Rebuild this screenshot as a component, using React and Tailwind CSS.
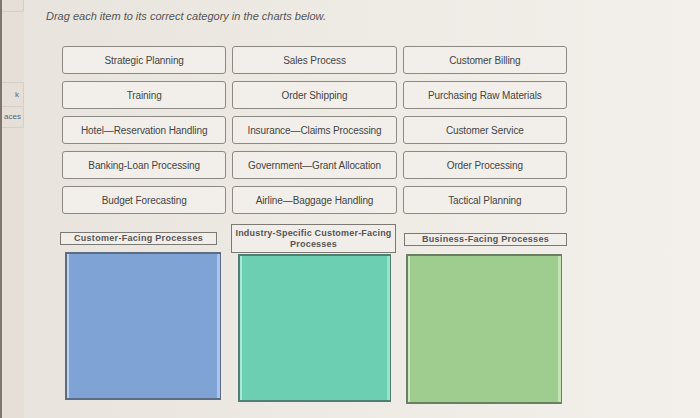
import React from 'react';

const ITEMS = [
  'Strategic Planning', 'Sales Process', 'Customer Billing',
  'Training', 'Order Shipping', 'Purchasing Raw Materials',
  'Hotel\u2014Reservation Handling', 'Insurance\u2014Claims Processing', 'Customer Service',
  'Banking-Loan Processing', 'Government\u2014Grant Allocation', 'Order Processing',
  'Budget Forecasting', 'Airline\u2014Baggage Handling', 'Tactical Planning',
];

const font = { fontFamily: '"Liberation Sans", Arial, sans-serif' };

export default function App() {
  return (
    <div
      className="flex h-[418px] w-[700px] overflow-hidden bg-gradient-to-r from-[#e8e3dd] via-[#eeeae4] to-[#f3f0eb] text-[#4b4b4b]"
      style={font}
    >
      {/* Side rail, mostly cut off */}
      <div className="flex w-[24px] shrink-0 flex-col border-l-2 border-[#7d766f] bg-[#e5dfd8]">
        <div className="h-[12px] rounded-br-[3px] border-b border-r border-[#d3ccc4]" />
        <div className="mt-[70px] flex h-[25px] items-center justify-end overflow-hidden border-y border-r border-[#d6cfc7] pr-[4px] text-[8px] text-[#5a6478]">
          k
        </div>
        <div className="flex h-[21px] items-center justify-end overflow-hidden border-b border-r border-[#d6cfc7] pr-[2px] text-[8px] text-[#5a6478]">
          aces
        </div>
      </div>

      {/* Main */}
      <div className="flex-1">
        <p className="ml-[22px] mt-[9px] h-[14px] text-[11px] italic leading-[14px] text-[#555]">
          Drag each item to its correct category in the charts below.
        </p>

        <div className="ml-[38px] mt-[23px] grid w-[505px] grid-cols-3 gap-x-[6px] gap-y-[7px]">
          {ITEMS.map((label) => (
            <div
              key={label}
              className="flex h-[28px] items-center justify-center rounded-[3px] border border-[#8c8884] bg-[#f2efea] text-[10px] tracking-[-0.1px] text-[#444]"
            >
              {label}
            </div>
          ))}
        </div>

        {/* Category charts */}
        <div className="ml-[36px] mt-[10px] flex items-start">
          <div className="flex w-[161px] flex-col">
            <div className="mt-[8px] flex h-[13px] w-[157px] items-center justify-center whitespace-nowrap border border-[#7c7874] bg-[#f1eee9] text-[9px] font-bold leading-none tracking-[0.3px] text-[#555]">
              Customer-Facing Processes
            </div>
            <div className="ml-[5px] mt-[7px] h-[148px] w-[156px] border-2 border-r border-[#5b6c84] bg-[#80a3d5] shadow-[inset_2px_0_0_#bcd3f0,inset_-3px_0_0_#a9c5ea]" />
          </div>

          <div className="ml-[10px] flex w-[165px] flex-col">
            <div className="flex h-[29px] w-[165px] flex-col items-center justify-center whitespace-nowrap border border-[#7c7874] bg-[#f1eee9] text-[9px] font-bold leading-[11px] tracking-[0.2px] text-[#555]">
              <span>Industry-Specific Customer-Facing</span>
              <span>Processes</span>
            </div>
            <div className="ml-[7px] mt-[1px] h-[148px] w-[153px] border-2 border-r border-[#4e7f70] bg-[#6dcfb2] shadow-[inset_2px_0_0_#a9ead6,inset_-3px_0_0_#99e3cc]" />
          </div>

          <div className="ml-[8px] flex w-[163px] flex-col">
            <div className="mt-[9px] flex h-[13px] w-[163px] items-center justify-center whitespace-nowrap border border-[#7c7874] bg-[#f1eee9] text-[9px] font-bold leading-none tracking-[0.3px] text-[#555]">
              Business-Facing Processes
            </div>
            <div className="ml-[2px] mt-[8px] h-[150px] w-[156px] border-2 border-r border-[#6b7f64] bg-[#9fcd90] shadow-[inset_2px_0_0_#cde9c2,inset_-3px_0_0_#c2e4b5]" />
          </div>
        </div>
      </div>
    </div>
  );
}
